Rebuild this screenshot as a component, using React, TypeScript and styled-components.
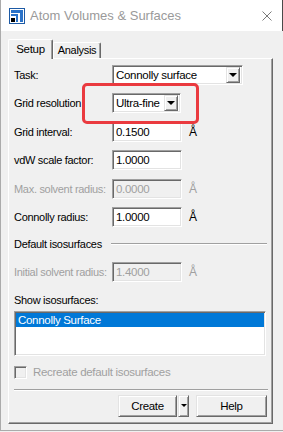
import styled, { createGlobalStyle } from 'styled-components'

const GlobalStyle = createGlobalStyle`
  html, body {
    margin: 0;
    padding: 0;
    background: #f0f0f0;
  }
  body {
    font-family: "Liberation Sans", Arial, sans-serif;
    font-size: 11px;
    letter-spacing: -0.3px;
    color: #000;
  }
  * {
    box-sizing: border-box;
  }
`

const Window = styled.div`
  position: relative;
  width: 283px;
  height: 431px;
  display: flex;
  flex-direction: column;
  background: #f0f0f0;
  border-left: 1px solid #ababab;
  border-bottom: 1px solid #ababab;
`

const TitleBar = styled.div`
  height: 31px;
  flex-shrink: 0;
  display: flex;
  align-items: center;
  padding: 0 10px 0 8px;
  background: #fff;
  border-right: 1px solid #4a4a4a;
`

const Title = styled.div`
  flex: 1;
  margin-left: 5px;
  font-family: "Liberation Sans", Arial, sans-serif;
  font-size: 13px;
  letter-spacing: 0;
  color: #9a9a9a;
`

const Body = styled.div`
  flex: 1;
  display: flex;
  flex-direction: column;
  padding: 8px 10px 6px 7px;
`

const TabStrip = styled.div`
  height: 19px;
  display: flex;
  align-items: flex-start;
`

const Tab = styled.div<{ $active?: boolean }>`
  position: relative;
  z-index: ${({ $active }) => ($active ? 2 : 1)};
  width: ${({ $active }) => ($active ? 45 : 48)}px;
  height: ${({ $active }) => ($active ? 20 : 16)}px;
  margin-top: ${({ $active }) => ($active ? 0 : 3)}px;
  display: flex;
  justify-content: center;
  padding-top: ${({ $active }) => ($active ? 3 : 1)}px;
  background: #f0f0f0;
  border-top: 1px solid #fff;
  border-left: 1px solid #fff;
  border-right: 1px solid #696969;
  border-radius: 2px 2px 0 0;
  box-shadow: inset -1px 0 #a0a0a0;
  font-size: ${({ $active }) => ($active ? 11.5 : 11)}px;
`

const Panel = styled.div`
  flex: 1;
  display: flex;
  flex-direction: column;
  padding: 6px 0 0 5px;
  border-top: 1px solid #fff;
  border-left: 1px solid #fff;
  border-right: 1px solid #696969;
  border-bottom: 1px solid #696969;
  box-shadow: inset -1px -1px #a0a0a0;
`

const Form = styled.div`
  display: flex;
  flex-direction: column;
  gap: 8.4px;
`

const Row = styled.div<{ $h?: number }>`
  display: flex;
  align-items: center;
  height: ${({ $h }) => $h ?? 20}px;
`

const Label = styled.div<{ $disabled?: boolean }>`
  width: 98px;
  flex-shrink: 0;
  white-space: nowrap;
  color: ${({ $disabled }) => ($disabled ? '#a0a0a0' : '#000')};
`

const sunken = `
  border: 1px solid;
  border-color: #a0a0a0 #fff #fff #a0a0a0;
  box-shadow: inset 1px 1px #696969, inset -1px -1px #e3e3e3;
`

const raised = `
  border: 1px solid;
  border-color: #e3e3e3 #696969 #696969 #e3e3e3;
  box-shadow: inset 1px 1px #fff, inset -1px -1px #a0a0a0;
  background: #f0f0f0;
`

const Edit = styled.div<{ $disabled?: boolean }>`
  ${sunken}
  width: 70px;
  height: 20px;
  display: flex;
  align-items: center;
  padding-left: 3px;
  background: ${({ $disabled }) => ($disabled ? '#f0f0f0' : '#fff')};
  color: ${({ $disabled }) => ($disabled ? '#a0a0a0' : '#000')};
  font-size: 11.5px;
`

const Combo = styled.div<{ $w: number }>`
  ${sunken}
  width: ${({ $w }) => $w}px;
  height: 20px;
  display: flex;
  align-items: center;
  padding: 0 2px 0 3px;
  background: #fff;
  font-size: 11.5px;
`

const ComboText = styled.div`
  flex: 1;
  white-space: nowrap;
`

const DropButton = styled.div`
  ${raised}
  width: 14px;
  height: 16px;
  display: flex;
  align-items: center;
  justify-content: center;
`

const Arrow = styled.div<{ $size?: number }>`
  width: 0;
  height: 0;
  border-left: ${({ $size }) => $size ?? 4}px solid transparent;
  border-right: ${({ $size }) => $size ?? 4}px solid transparent;
  border-top: ${({ $size }) => $size ?? 4}px solid #000;
`

const Unit = styled.div<{ $disabled?: boolean }>`
  margin-left: 7px;
  font-size: 12px;
  color: ${({ $disabled }) => ($disabled ? '#a0a0a0' : '#000')};
`

const GroupLine = styled.div`
  width: 156px;
  height: 2px;
  margin-left: -1px;
  border-top: 1px solid #a0a0a0;
  border-bottom: 1px solid #fff;
`

const ShowLabel = styled.div`
  height: 16px;
  margin-top: 10px;
  display: flex;
  align-items: center;
`

const ListBox = styled.div`
  ${sunken}
  width: 252px;
  height: 45px;
  margin-top: 3px;
  padding: 1px;
  background: #fff;
`

const ListItem = styled.div<{ $selected?: boolean }>`
  height: 14px;
  line-height: 14px;
  padding-left: 2px;
  font-size: 11.5px;
  background: ${({ $selected }) => ($selected ? '#0078d7' : 'transparent')};
  color: ${({ $selected }) => ($selected ? '#fff' : '#000')};
`

const CheckRow = styled.div`
  display: flex;
  align-items: center;
  height: 13px;
  margin-top: 10px;
`

const CheckBox = styled.div`
  ${sunken}
  width: 13px;
  height: 13px;
  background: #f0f0f0;
`

const CheckLabel = styled.div`
  margin-left: 6px;
  color: #a0a0a0;
  font-size: 11.5px;
`

const Separator = styled.div`
  width: 254px;
  height: 2px;
  margin-top: 10px;
  border-top: 1px solid #a0a0a0;
  border-bottom: 1px solid #fff;
`

const ButtonRow = styled.div`
  width: 254px;
  height: 22px;
  margin-top: 4px;
  display: flex;
  justify-content: flex-end;
  padding-right: 1px;
`

const Button = styled.div<{ $w: number; $gap?: number }>`
  ${raised}
  width: ${({ $w }) => $w}px;
  height: 22px;
  margin-left: ${({ $gap }) => $gap ?? 0}px;
  display: flex;
  align-items: center;
  justify-content: center;
  font-size: 11.5px;
`

const Highlight = styled.div`
  position: absolute;
  left: 81px;
  top: 83px;
  width: 117px;
  height: 41px;
  border: 3.5px solid #ea3a3f;
  border-radius: 5px;
  pointer-events: none;
`

const AppIcon = () => (
  <svg width="16" height="16" viewBox="0 0 16 16">
    <rect x="0.5" y="0.5" width="15" height="15" fill="#fff" stroke="#1d5aa5" />
    <path d="M2 2h12v12h-3V5H2z" fill="#2b73c9" />
    <path d="M2 6h7v8H7V8H2z" fill="#2b73c9" />
    <rect x="2" y="10" width="4" height="4" fill="#000" />
  </svg>
)

const CloseIcon = () => (
  <svg width="10" height="10" viewBox="0 0 10 10">
    <path d="M0.5 0.5L9.5 9.5M9.5 0.5L0.5 9.5" stroke="#7a7a7a" strokeWidth="1" />
  </svg>
)

export default function App() {
  return (
    <>
      <GlobalStyle />
      <Window>
        <TitleBar>
          <AppIcon />
          <Title>Atom Volumes &amp; Surfaces</Title>
          <CloseIcon />
        </TitleBar>
        <Body>
          <TabStrip>
            <Tab $active>Setup</Tab>
            <Tab>Analysis</Tab>
          </TabStrip>
          <Panel>
            <Form>
              <Row>
                <Label>Task:</Label>
                <Combo $w={131}>
                  <ComboText>Connolly surface</ComboText>
                  <DropButton>
                    <Arrow />
                  </DropButton>
                </Combo>
              </Row>
              <Row>
                <Label>Grid resolution</Label>
                <Combo $w={69}>
                  <ComboText>Ultra-fine</ComboText>
                  <DropButton>
                    <Arrow />
                  </DropButton>
                </Combo>
              </Row>
              <Row>
                <Label>Grid interval:</Label>
                <Edit>0.1500</Edit>
                <Unit>Å</Unit>
              </Row>
              <Row>
                <Label>vdW scale factor:</Label>
                <Edit>1.0000</Edit>
              </Row>
              <Row>
                <Label $disabled>Max. solvent radius:</Label>
                <Edit $disabled>0.0000</Edit>
                <Unit $disabled>Å</Unit>
              </Row>
              <Row>
                <Label>Connolly radius:</Label>
                <Edit>1.0000</Edit>
                <Unit>Å</Unit>
              </Row>
              <Row $h={18}>
                <Label>Default isosurfaces</Label>
                <GroupLine />
              </Row>
              <Row>
                <Label $disabled>Initial solvent radius:</Label>
                <Edit $disabled>1.4000</Edit>
                <Unit $disabled>Å</Unit>
              </Row>
            </Form>
            <ShowLabel>Show isosurfaces:</ShowLabel>
            <ListBox>
              <ListItem $selected>Connolly Surface</ListItem>
            </ListBox>
            <CheckRow>
              <CheckBox />
              <CheckLabel>Recreate default isosurfaces</CheckLabel>
            </CheckRow>
            <Separator />
            <ButtonRow>
              <Button $w={59}>Create</Button>
              <Button $w={11} $gap={1}>
                <Arrow $size={3} />
              </Button>
              <Button $w={71} $gap={7}>
                Help
              </Button>
            </ButtonRow>
          </Panel>
        </Body>
        <Highlight />
      </Window>
    </>
  )
}
